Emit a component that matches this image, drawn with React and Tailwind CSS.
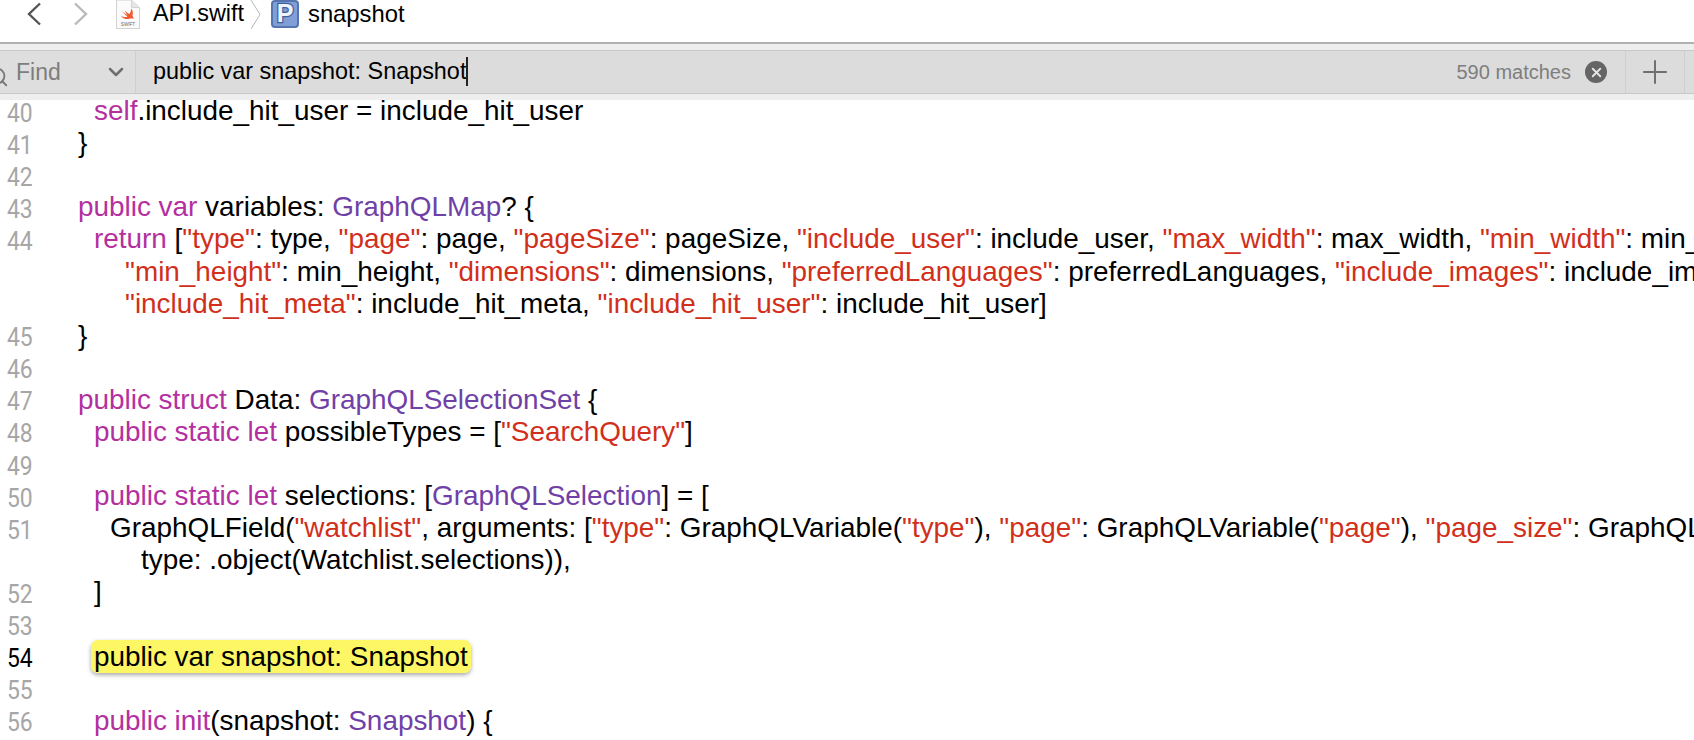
import React from 'react';
import { ChevronDown, Plus, Search, X } from 'lucide-react';

const k = (t) => ({ t, c: 'text-[#b4309f]' });
const p = (t) => ({ t, c: 'text-[#6f41a7]' });
const s = (t) => ({ t, c: 'text-[#d12f1b]' });

const rows = [
  { n: 40, i: 'pl-[31px]', parts: [k('self'), '.include_hit_user = include_hit_user'] },
  { n: 41, i: 'pl-[15px]', parts: ['}'] },
  { n: 42, i: '', parts: [] },
  { n: 43, i: 'pl-[15px]', parts: [k('public var'), ' variables: ', p('GraphQLMap'), '? {'] },
  { n: 44, i: 'pl-[31px]', parts: [k('return'), ' [', s('"type"'), ': type, ', s('"page"'), ': page, ', s('"pageSize"'), ': pageSize, ', s('"include_user"'), ': include_user, ', s('"max_width"'), ': max_width, ', s('"min_width"'), ': min_width,'] },
  { i: 'pl-[62px]', parts: [s('"min_height"'), ': min_height, ', s('"dimensions"'), ': dimensions, ', s('"preferredLanguages"'), ': preferredLanguages, ', s('"include_images"'), ': include_images,'] },
  { i: 'pl-[62px]', parts: [s('"include_hit_meta"'), ': include_hit_meta, ', s('"include_hit_user"'), ': include_hit_user]'] },
  { n: 45, i: 'pl-[15px]', parts: ['}'] },
  { n: 46, i: '', parts: [] },
  { n: 47, i: 'pl-[15px]', parts: [k('public struct'), ' Data: ', p('GraphQLSelectionSet'), ' {'] },
  { n: 48, i: 'pl-[31px]', parts: [k('public static let'), ' possibleTypes = [', s('"SearchQuery"'), ']'] },
  { n: 49, i: '', parts: [] },
  { n: 50, i: 'pl-[31px]', parts: [k('public static let'), ' selections: [', p('GraphQLSelection'), '] = ['] },
  { n: 51, i: 'pl-[47px]', parts: ['GraphQLField(', s('"watchlist"'), ', arguments: [', s('"type"'), ': GraphQLVariable(', s('"type"'), '), ', s('"page"'), ': GraphQLVariable(', s('"page"'), '), ', s('"page_size"'), ': GraphQLVariable('] },
  { i: 'pl-[78px]', parts: ['type: .object(Watchlist.selections)),'] },
  { n: 52, i: 'pl-[31px]', parts: [']'] },
  { n: 53, i: '', parts: [] },
  { n: 54, i: 'pl-[31px]', hit: true, parts: ['public var snapshot: Snapshot'] },
  { n: 55, i: '', parts: [] },
  { n: 56, i: 'pl-[31px]', parts: [k('public init'), '(snapshot: ', p('Snapshot'), ') {'] },
];

function SwiftFile() {
  return (
    <svg width="24" height="29" viewBox="0 0 24 29" className="shrink-0">
      <path d="M0.5 0H15.5L23.5 7.5V28.5H0.5Z" fill="#fbfbfb" stroke="#d2d2d2" />
      <path d="M15.5 0V7.5H23.5" fill="#e6e6e6" stroke="#d2d2d2" />
      <path d="M15.5 8.5C17 11 17.3 13.8 16.4 15.7C17.7 17.2 17.6 18.6 17.3 19.1C16.4 18 15 18 13.6 18.7C10.2 19.9 7 18.4 4.8 15.7C7.4 17.3 10 17.4 11.4 16.5C9.2 15 7.5 13 6 10.8C8.2 13 10 14.3 11.8 15.2C10.5 13.6 9.3 12.2 8.8 10.4C10.5 12.2 12.2 13.4 13.6 14.1C14.5 12.5 15 10.5 15.5 8.5Z" fill="#ef5a2f" />
      <text x="12" y="25.5" textAnchor="middle" fontSize="4.6" fill="#666" fontFamily="Liberation Sans, sans-serif">SWIFT</text>
    </svg>
  );
}

function CodeLine({ row }) {
  return (
    <div className="flex h-[32.1px] items-center">
      <div className="w-[63px] shrink-0 pl-[7px] pt-[3px] font-['Roboto',sans-serif] text-[26px]">
        <span className={`inline-block origin-left scale-x-[0.88] ${row.hit ? 'text-black' : 'text-[#a6a6a6]'}`}>{row.n}</span>
      </div>
      <div className={`whitespace-pre ${row.i}`}>
        {row.hit ? (
          <span className="-mx-[3px] rounded-[7px] bg-[#fdf665] px-[3px] py-px shadow-[0_2px_4px_rgba(0,0,0,0.35)]">{row.parts[0]}</span>
        ) : (
          row.parts.map((part, idx) =>
            typeof part === 'string' ? <span key={idx}>{part}</span> : <span key={idx} className={part.c}>{part.t}</span>
          )
        )}
      </div>
    </div>
  );
}

export default function App() {
  return (
    <div className="h-[740px] w-[1694px] overflow-hidden bg-white font-['Liberation_Sans',sans-serif] text-black">
      <div className="flex h-[42px] items-center pb-[14px]">
        <svg width="16" height="24" viewBox="0 0 16 24" className="ml-[26px] shrink-0" fill="none" stroke="#555" strokeWidth="2.4">
          <path d="M14 1.5L3 12L14 22.5" />
        </svg>
        <svg width="16" height="24" viewBox="0 0 16 24" className="ml-[31px] shrink-0" fill="none" stroke="#b9b9b9" strokeWidth="2.4">
          <path d="M2 1.5L13 12L2 22.5" />
        </svg>
        <div className="ml-[27px]"><SwiftFile /></div>
        <span className="ml-[13px] text-[23.4px]">API.swift</span>
        <svg width="11" height="29" viewBox="0 0 11 29" className="ml-[6px] shrink-0" fill="none" stroke="#b5b5b5" strokeWidth="1">
          <path d="M1 0L10 14.5L1 29" />
        </svg>
        <div className="ml-[10px] flex h-[28px] w-[28px] shrink-0 items-center justify-center rounded-[4px] border-2 border-[#5475b0] bg-[#7f9fd6] text-[25px] font-bold text-[#eef3fc] [-webkit-text-stroke:2.5px_#3f5f9c] [paint-order:stroke_fill]">P</div>
        <span className="ml-[9px] text-[23.8px]">snapshot</span>
      </div>
      <div className="h-[2px] bg-[#b0b0b0]" />
      <div className="h-[6px] bg-[#eeeeee]" />
      <div className="flex h-[44px] items-center border-y border-[#c8c8c8] bg-[#dcdcdc]">
        <div className="flex h-full w-[136px] shrink-0 items-center border-r border-[#cfcfcf] bg-[#dedede]">
          <Search size={22} strokeWidth={2} className="ml-[-13px] mt-[9px] shrink-0 text-[#777]" />
          <span className="ml-[7px] text-[23px] text-[#7d7d7d]">Find</span>
          <ChevronDown size={24} strokeWidth={2.5} className="ml-[43px] shrink-0 text-[#6f6f6f]" />
        </div>
        <div className="ml-[17px] flex items-center text-[23.4px]">
          <span>public var snapshot: Snapshot</span>
          <span className="h-[29px] w-[2px] bg-[#222]" />
        </div>
        <span className="ml-auto text-[20px] text-[#7e7e7e]">590 matches</span>
        <div className="ml-[14px] flex h-[22px] w-[22px] shrink-0 items-center justify-center rounded-full bg-[#656565]">
          <X size={15} strokeWidth={3} className="text-[#e4e4e4]" />
        </div>
        <div className="ml-[18px] flex h-full w-[60px] shrink-0 items-center justify-center border-x border-[#cfcfcf]">
          <Plus size={38} strokeWidth={1.25} className="text-[#6f6f6f]" />
        </div>
        <div className="w-[9px] shrink-0" />
      </div>
      <div className="h-[6px] bg-[#eeeeee]" />
      <div className="-mt-[5px] text-[27.9px] leading-[32px]">
        {rows.map((row, i) => <CodeLine key={i} row={row} />)}
      </div>
    </div>
  );
}
